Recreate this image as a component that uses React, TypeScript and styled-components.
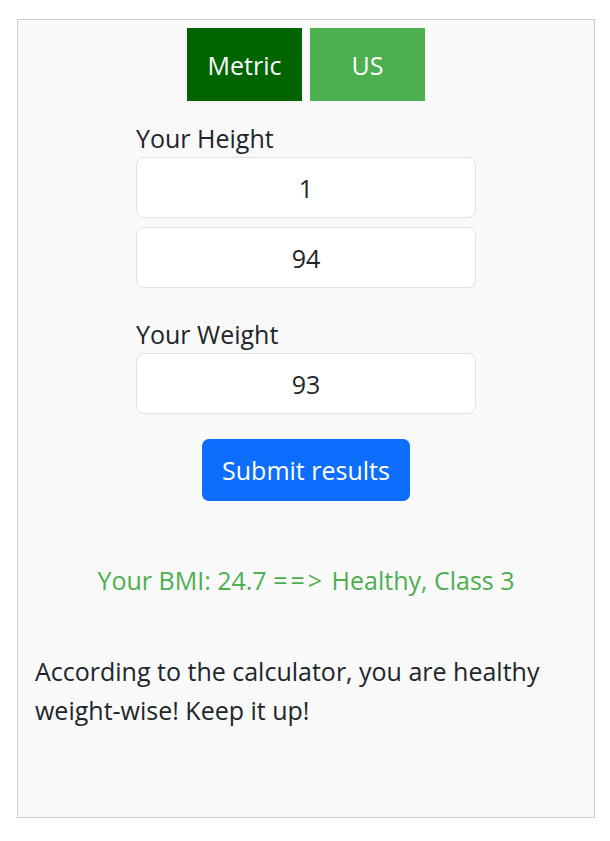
import React from "react";
import styled, { createGlobalStyle } from "styled-components";

const Global = createGlobalStyle`
  html, body { margin: 0; padding: 0; background: #ffffff; }
  body { font-family: "Open Sans", "Noto Sans", Arial, sans-serif; color: #212529; }
  * { box-sizing: border-box; }
`;

const Card = styled.div`
  width: 578px;
  height: 799px;
  margin: 19px 0 0 17px;
  border: 1px solid #cccccc;
  background: #f9f9f9;
  padding: 8px 17px 0 17px;
  display: flex;
  flex-direction: column;
`;

const Toggle = styled.div`
  display: flex;
  justify-content: center;
  gap: 8px;
`;

const UnitButton = styled.button<{ $active?: boolean }>`
  width: 115px;
  height: 73px;
  border: none;
  background: ${(p) => (p.$active ? "#006400" : "#4caf50")};
  color: #ffffff;
  font-family: inherit;
  font-size: 25px;
  padding: 0;
  cursor: pointer;
`;

const Form = styled.form`
  width: 340px;
  margin: 0 auto;
  display: flex;
  flex-direction: column;
`;

const Label = styled.label<{ $top: number }>`
  display: block;
  font-size: 25px;
  line-height: 36px;
  margin-top: ${(p) => p.$top}px;
  margin-bottom: 1px;
`;

const Input = styled.input`
  width: 340px;
  height: 61px;
  border: 1px solid #dee2e6;
  border-radius: 8px;
  background: #ffffff;
  text-align: center;
  font-family: inherit;
  font-size: 25px;
  color: #212529;
  margin-bottom: 9px;
  outline: none;
`;

const Submit = styled.button`
  align-self: center;
  width: 208px;
  height: 62px;
  margin-top: 16px;
  border: none;
  border-radius: 7px;
  background: #0d6efd;
  color: #ffffff;
  font-family: inherit;
  font-size: 25px;
  padding-bottom: 2px;
  cursor: pointer;
`;

const Result = styled.div`
  margin-top: 61px;
  text-align: center;
  color: #4caf50;
  font-size: 25px;
  line-height: 36px;
`;

const Arrow = styled.span`
  letter-spacing: 3px;
`;

const Message = styled.p`
  margin: 54px 0 0 0;
  font-size: 25px;
  line-height: 39px;
`;

export default function App() {
  return (
    <>
      <Global />
      <Card>
        <Toggle>
          <UnitButton $active>Metric</UnitButton>
          <UnitButton>US</UnitButton>
        </Toggle>
        <Form onSubmit={(e) => e.preventDefault()}>
          <Label $top={19}>Your Height</Label>
          <Input defaultValue="1" />
          <Input defaultValue="94" />
          <Label $top={19}>Your Weight</Label>
          <Input defaultValue="93" />
          <Submit type="submit">Submit results</Submit>
        </Form>
        <Result>
          Your BMI: 24.7 <Arrow>==&gt;</Arrow> Healthy, Class 3
        </Result>
        <Message>
          According to the calculator, you are healthy weight-wise! Keep it up!
        </Message>
      </Card>
    </>
  );
}
